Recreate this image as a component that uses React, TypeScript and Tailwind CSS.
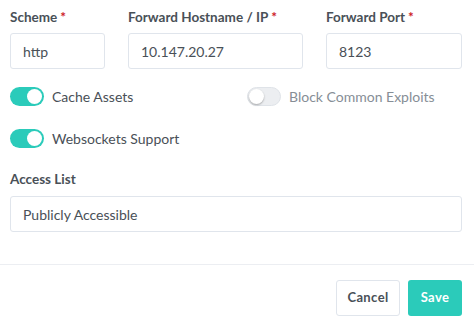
function Toggle({ on }: { on: boolean }) {
  return (
    <span
      className={
        on
          ? 'relative inline-block h-[19px] w-[34px] shrink-0 rounded-full bg-[#2bcbba]'
          : 'relative inline-block h-[19px] w-[34px] shrink-0 rounded-full border border-[#dfe3e8] bg-[#eceef1]'
      }
    >
      <span
        className={
          on
            ? 'absolute right-[2px] top-[2px] h-[15px] w-[15px] rounded-full bg-white'
            : 'absolute left-[1px] top-[1px] h-[15px] w-[15px] rounded-full bg-white shadow-[0_1px_2px_rgba(0,0,0,0.3)]'
        }
      />
    </span>
  )
}

function Label({ text, req }: { text: string; req?: boolean }) {
  return (
    <div className="text-[13.5px] font-bold leading-[14px] text-[#495057]">
      {text}
      {req && <span className="ml-[3px] text-[#cd201f]">*</span>}
    </div>
  )
}

function Field({ value }: { value: string }) {
  return (
    <div className="flex h-[36px] items-center rounded-[3px] border border-[#e0e5ec] bg-white px-[12px] text-[14px] text-[#495057]">
      {value}
    </div>
  )
}

export default function App() {
  return (
    <div
      className="h-[325px] w-[474px] overflow-hidden bg-white"
      style={{ fontFamily: 'Lato, "Source Sans Pro", "Noto Sans", sans-serif' }}
    >
      <div className="px-[10px] pt-[10px]">
        <div className="grid grid-cols-[95px_175px_136px] gap-x-[23px]">
          <div>
            <Label text="Scheme" req />
            <div className="mt-[9px]">
              <Field value="http" />
            </div>
          </div>
          <div>
            <Label text="Forward Hostname / IP" req />
            <div className="mt-[9px]">
              <Field value="10.147.20.27" />
            </div>
          </div>
          <div>
            <Label text="Forward Port" req />
            <div className="mt-[9px]">
              <Field value="8123" />
            </div>
          </div>
        </div>

        <div className="mt-[17px] grid grid-cols-[237px_1fr]">
          <label className="flex h-[20px] items-center gap-[8px] text-[14px] text-[#495057]">
            <Toggle on />
            Cache Assets
          </label>
          <label className="flex h-[20px] items-center gap-[8px] text-[14px] text-[#868e96]">
            <Toggle on={false} />
            Block Common Exploits
          </label>
        </div>

        <label className="mt-[22px] flex h-[20px] items-center gap-[8px] text-[14px] text-[#495057]">
          <Toggle on />
          Websockets Support
        </label>

        <div className="mt-[24px]">
          <Label text="Access List" />
          <div className="mt-[10px] w-[452px]">
            <Field value="Publicly Accessible" />
          </div>
        </div>
      </div>

      <div className="mt-[32px] border-t border-[#eceef2]" />

      <div className="flex justify-end gap-[8px] pr-[12px] pt-[15px]">
        <button className="h-[36px] w-[64px] rounded-[3px] border border-[#e0e5ec] bg-white text-[13px] font-bold tracking-[0.03em] text-[#495057]">
          Cancel
        </button>
        <button className="h-[36px] w-[54px] rounded-[3px] bg-[#2bcbba] text-[13px] font-bold tracking-[0.03em] text-white">
          Save
        </button>
      </div>
    </div>
  )
}
